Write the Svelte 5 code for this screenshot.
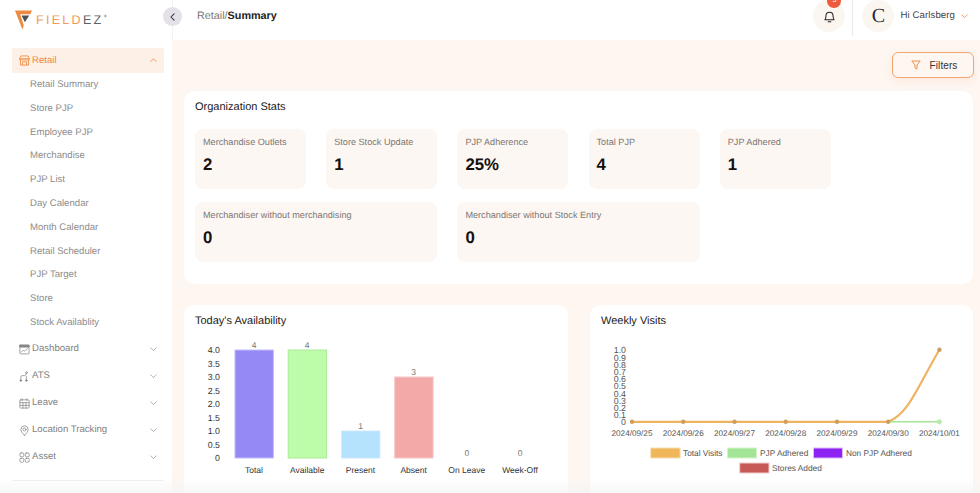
<script>
  const children = ['Retail Summary','Store PJP','Employee PJP','Merchandise','PJP List','Day Calendar','Month Calendar','Retail Scheduler','PJP Target','Store','Stock Availablity'];
  const groups = [
    { name: 'Dashboard', icon: 'dash' },
    { name: 'ATS', icon: 'ats' },
    { name: 'Leave', icon: 'leave' },
    { name: 'Location Tracking', icon: 'pin' },
    { name: 'Asset', icon: 'asset' }
  ];
  const topStats = [
    { label: 'Merchandise Outlets', value: '2' },
    { label: 'Store Stock Update', value: '1' },
    { label: 'PJP Adherence', value: '25%' },
    { label: 'Total PJP', value: '4' },
    { label: 'PJP Adhered', value: '1' }
  ];
  const wideStats = [
    { label: 'Merchandiser without merchandising', value: '0' },
    { label: 'Merchandiser without Stock Entry', value: '0' }
  ];

  // bar chart, coordinates inside a 384x188 svg
  const barBase = 153;
  const perUnit = 27;
  const bars = [
    { name: 'Total', v: 4, cx: 70, fill: '#9489f5', edge: '#c3bcf9' },
    { name: 'Available', v: 4, cx: 123.2, fill: '#bdfdaa', edge: '#a8ec98' },
    { name: 'Present', v: 1, cx: 176.5, fill: '#b5e2fc', edge: '#cdeafc' },
    { name: 'Absent', v: 3, cx: 229.7, fill: '#f3a9a8', edge: '#f7c6c5' },
    { name: 'On Leave', v: 0, cx: 282.8, fill: 'none', edge: 'none' },
    { name: 'Week-Off', v: 0, cx: 336, fill: 'none', edge: 'none' }
  ];
  const barTicks = ['4.0','3.5','3.0','2.5','2.0','1.5','1.0','0.5','0'];

  // line chart, coordinates inside a 383x188 svg
  const xs = [42, 93.2, 144.5, 195.7, 247, 298.2, 349.4];
  const dates = ['2024/09/25','2024/09/26','2024/09/27','2024/09/28','2024/09/29','2024/09/30','2024/10/01'];
  const y0 = 116.8;
  const y1 = 44.8;
  const lineTicks = ['1.0','0.9','0.8','0.7','0.6','0.5','0.4','0.3','0.2','0.1','0'];
  const legend = [
    { label: 'Total Visits', x: 60.7, y: 143, w: 29.4, fill: '#efb65a', edge: '#f8e0b8', tx: 93 },
    { label: 'PJP Adhered', x: 137.5, y: 143, w: 29, fill: '#a3e596', edge: '#d3f3cd', tx: 170 },
    { label: 'Non PJP Adhered', x: 223.5, y: 143, w: 29, fill: '#8e22f3', edge: '#dcbcfa', tx: 256 },
    { label: 'Stores Added', x: 149.7, y: 158, w: 29.3, fill: '#c75a57', edge: '#efcfce', tx: 182 }
  ];
</script>

{#snippet chevron(up, color)}
  <svg class="chev" viewBox="0 0 10 6" width="7" height="4.4" fill="none" stroke={color} stroke-width="1.1" stroke-linecap="round" stroke-linejoin="round">
    {#if up}<path d="M1 5l4-4 4 4" />{:else}<path d="M1 1l4 4 4-4" />{/if}
  </svg>
{/snippet}

{#snippet navIcon(kind)}
  <svg class="nav-icon" viewBox="0 0 12 12" width="11" height="11" fill="none" stroke="#858585" stroke-width="0.8" stroke-linejoin="round" stroke-linecap="round">
    {#if kind === 'dash'}
      <rect x="1" y="1.2" width="10" height="9.6" rx="0.8" />
      <rect x="1" y="1.2" width="10" height="2.2" fill="#858585" />
      <path d="M2.5 8.8l2-2 1.5 1 3.2-2.6" />
    {:else if kind === 'ats'}
      <path d="M2 10V6.5Q2 5 3.5 5H6Q7.6 5 7.6 3.5V3" />
      <circle cx="8.2" cy="1.8" r="1" />
      <circle cx="2" cy="10.4" r="0.9" fill="#858585" />
      <path d="M8 6v4" />
      <circle cx="8" cy="10.4" r="0.9" fill="#858585" />
    {:else if kind === 'leave'}
      <rect x="1" y="2" width="10" height="9" rx="0.8" />
      <path d="M1 5h10M3.5 0.8v2M8.5 0.8v2M1 8h10M4.3 5v6M7.6 5v6" />
    {:else if kind === 'pin'}
      <path d="M6 11.2C3.6 8.8 2 7 2 4.9a4 4 0 0 1 8 0C10 7 8.4 8.8 6 11.2z" />
      <circle cx="6" cy="4.9" r="1.7" />
    {:else}
      <rect x="1" y="1" width="4.2" height="4.2" rx="1.2" />
      <rect x="6.9" y="1" width="4.2" height="4.2" rx="1.2" />
      <rect x="1" y="6.9" width="4.2" height="4.2" rx="1.2" />
      <rect x="6.9" y="6.9" width="4.2" height="4.2" rx="1.2" />
    {/if}
  </svg>
{/snippet}

<div class="page">
  <aside class="sidebar">
    <div class="brand">
      <svg class="logo" viewBox="0 0 17 20" width="17" height="20">
        <path d="M0 0.5H17L15.4 4.2H5.2L8.8 15.4 7.4 19.6z" fill="#ee8a3f" />
        <path d="M6.6 5.4H14.2L9.9 12.2z" fill="#4b5157" />
      </svg>
      <span class="wordmark"><span class="orange">FIELD</span><span class="dark">EZ</span><sup>+</sup></span>
    </div>

    <nav class="nav">
      <div class="item active">
        <svg class="nav-icon" viewBox="0 0 12 12" width="11" height="11" fill="none" stroke="#f0853a" stroke-width="0.9" stroke-linejoin="round">
          <path d="M2 1h8l1.2 3H0.8zM0.8 4v1.4h10.4V4M1.6 5.4V11h8.8V5.4M3.8 11V7.4h4.4V11" />
        </svg>
        <span class="item-label">Retail</span>
        {@render chevron(true, '#f0853a')}
      </div>
      <ul class="children">
        {#each children as child}
          <li>{child}</li>
        {/each}
      </ul>
      <div class="groups">
        {#each groups as g}
          <div class="item">
            {@render navIcon(g.icon)}
            <span class="item-label">{g.name}</span>
            {@render chevron(false, '#999')}
          </div>
        {/each}
      </div>
    </nav>
    <div class="side-rule"></div>
  </aside>

  <button class="collapse" aria-label="Collapse sidebar">
    <svg viewBox="0 0 6 10" width="5" height="8" fill="none" stroke="#333" stroke-width="1.3" stroke-linecap="round" stroke-linejoin="round"><path d="M5 1L1 5l4 4" /></svg>
  </button>

  <div class="content">
    <header class="topbar">
      <div class="crumbs">Retail/<b>Summary</b></div>
      <div class="top-right">
        <div class="bell">
          <svg viewBox="0 0 14 14" width="13" height="13" fill="none" stroke="#222" stroke-width="1.1" stroke-linejoin="round" stroke-linecap="round">
            <path d="M2 10.5c1-1 1.2-2 1.2-4.2a3.8 3.8 0 0 1 7.6 0c0 2.2.2 3.2 1.2 4.2zM5.6 12.6h2.8" />
          </svg>
          <span class="badge">5</span>
        </div>
        <div class="vrule"></div>
        <div class="avatar">C</div>
        <span class="hi">Hi Carlsberg</span>
        <span class="hi-chev">{@render chevron(false, '#f0853a')}</span>
      </div>
    </header>

    <main class="main">
      <div class="filter-row">
        <button class="filters">
          <svg viewBox="0 0 12 12" width="10" height="10" fill="none" stroke="#f0853a" stroke-width="1.1" stroke-linejoin="round"><path d="M1 1.2h10L7.2 6v4.8L4.8 9.4V6z" /></svg>
          <span>Filters</span>
        </button>
      </div>

      <section class="card stats">
        <h2>Organization Stats</h2>
        <div class="tiles">
          {#each topStats as s}
            <div class="tile">
              <div class="tile-label">{s.label}</div>
              <div class="tile-value">{s.value}</div>
            </div>
          {/each}
          {#each wideStats as s}
            <div class="tile wide">
              <div class="tile-label">{s.label}</div>
              <div class="tile-value">{s.value}</div>
            </div>
          {/each}
        </div>
      </section>

      <div class="charts">
        <section class="card chart">
          <h2>Today's Availability</h2>
          <svg class="plot" viewBox="0 0 384 188" width="384" height="188">
            {#each barTicks as t, i}
              <text class="tick" x="36" y={44.7 + i * 13.5 + 3.5} text-anchor="end">{t}</text>
            {/each}
            {#each bars as b}
              {#if b.v > 0}
                <rect x={b.cx - 19} y={barBase - b.v * perUnit} width="38.4" height={b.v * perUnit} fill={b.fill} stroke={b.edge} stroke-width="1" />
              {/if}
              <text class="val" x={b.cx} y={barBase - b.v * perUnit - 2.5} text-anchor="middle">{b.v}</text>
              <text class="cat" x={b.cx} y="168" text-anchor="middle">{b.name}</text>
            {/each}
          </svg>
        </section>

        <section class="card chart">
          <h2>Weekly Visits</h2>
          <svg class="plot" viewBox="0 0 383 188" width="383" height="188">
            {#each lineTicks as t, i}
              <text class="tick soft" x="36" y={y1 + i * 7.2 + 3.5} text-anchor="end">{t}</text>
            {/each}
            <line x1={xs[5]} y1={y0} x2={xs[6]} y2={y0} stroke="#a3e596" stroke-width="1.6" />
            <circle cx={xs[6]} cy={y0} r="2" fill="#bfe9b4" stroke="#a3e596" stroke-width="0.8" />
            <path d="M{xs[0]} {y0} L{xs[5]} {y0} C 318 {y0 - 8}, 325 {y0 - 30}, {xs[6]} {y1}" fill="none" stroke="#eeb361" stroke-width="2.2" />
            {#each xs as x, i}
              <circle cx={x} cy={i === 6 ? y1 : y0} r="2.2" fill="#cd9e5f" />
              <text class="date" x={x} y="131" text-anchor="middle">{dates[i]}</text>
            {/each}
            {#each legend as l}
              <rect x={l.x} y={l.y} width={l.w} height="10" fill={l.fill} stroke={l.edge} stroke-width="1" />
              <text class="legend" x={l.tx} y={l.y + 8}>{l.label}</text>
            {/each}
          </svg>
        </section>
      </div>
    </main>
  </div>
  <div class="bottom-fade"></div>
</div>

<style>
  :global(body) {
    margin: 0;
    background: #fdf6f1;
    font-family: "Liberation Sans", Arial, sans-serif;
    text-rendering: geometricPrecision;
    overflow: hidden;
  }
  .page {
    position: relative;
    display: flex;
    width: 980px;
    height: 493px;
    overflow: hidden;
  }
  .bottom-fade {
    position: absolute;
    left: 0;
    right: 0;
    bottom: 0;
    height: 14px;
    background: linear-gradient(rgba(244, 244, 244, 0), rgba(244, 244, 244, 0.75));
    pointer-events: none;
  }
  .sidebar {
    flex: 0 0 172px;
    background: #fff;
    box-sizing: border-box;
    padding: 0 8px 0 12px;
    position: relative;
  }
  .brand {
    height: 48px;
    display: flex;
    align-items: flex-start;
    padding: 10px 0 0 3px;
    box-sizing: border-box;
    gap: 4px;
  }
  .wordmark {
    font-size: 12.5px;
    letter-spacing: 2.3px;
    line-height: 19px;
    margin-top: 1px;
    white-space: nowrap;
  }
  .orange { color: #ee9a5c; }
  .dark { color: #5a6066; }
  .wordmark sup {
    font-size: 6px;
    color: #5a6066;
    vertical-align: 6px;
    line-height: 0;
    letter-spacing: 0;
  }
  .item {
    height: 25px;
    display: flex;
    align-items: center;
    padding: 0 6px 0 7px;
    gap: 2px;
    font-size: 9.6px;
    color: #828282;
    border-radius: 1px;
  }
  .item .item-label { padding-bottom: 1px; }
  .item.active {
    background: #fdf0e6;
    color: #f0853a;
  }
  .item-label { flex: 1; }
  .chev { margin-right: 1px; flex: none; }
  .children {
    list-style: none;
    margin: 0;
    padding: 0 0 0 18px;
  }
  .children li {
    height: 23.8px;
    line-height: 24.8px;
    font-size: 9.6px;
    color: #8d8d8d;
  }
  .groups {
    margin-top: 2px;
    display: flex;
    flex-direction: column;
    gap: 2px;
  }
  .side-rule {
    position: absolute;
    left: 12px;
    right: 8px;
    top: 480px;
    border-top: 1px solid #efefef;
  }
  .collapse {
    position: absolute;
    left: 163px;
    top: 7px;
    width: 19px;
    height: 19px;
    border: 0;
    border-radius: 50%;
    background: #e4e1e8;
    padding: 0;
    display: flex;
    align-items: center;
    justify-content: center;
    z-index: 2;
  }
  .content {
    flex: 1;
    min-width: 0;
    display: flex;
    flex-direction: column;
  }
  .topbar {
    height: 40px;
    background: #fff;
    flex: none;
    display: flex;
    justify-content: space-between;
    box-sizing: border-box;
    border-left: 1px solid #f6f1f1;
    padding-left: 24px;
  }
  .crumbs {
    font-size: 10.8px;
    color: #777;
    line-height: 32px;
  }
  .crumbs b { color: #222; font-weight: 700; }
  .top-right {
    display: flex;
    align-items: flex-start;
    height: 36px;
  }
  .bell {
    position: relative;
    width: 32px;
    height: 32px;
    margin-right: 7px;
    border-radius: 50%;
    background: #fcf6f1;
    display: flex;
    align-items: center;
    justify-content: center;
  }
  .badge {
    position: absolute;
    left: 14px;
    top: -6px;
    width: 14px;
    height: 14px;
    border-radius: 50%;
    background: #ef5a3c;
    color: #fff;
    font-size: 7px;
    line-height: 14px;
    text-align: center;
  }
  .vrule {
    width: 1px;
    height: 36px;
    background: #e9e9e9;
    margin-right: 9px;
  }
  .avatar {
    width: 32px;
    height: 32px;
    border-radius: 50%;
    background: #fcf6f1;
    font-family: "Liberation Serif", serif;
    font-size: 20px;
    line-height: 33px;
    text-align: center;
    color: #1d2733;
    margin-right: 6px;
  }
  .hi {
    font-size: 9.6px;
    letter-spacing: 0.1px;
    color: #444;
    line-height: 32px;
    margin-right: 6px;
  }
  .hi-chev {
    display: flex;
    align-items: center;
    height: 32px;
    margin-right: 11px;
  }
  .main {
    flex: 1;
    padding: 12px 7px 0 12px;
    min-height: 0;
  }
  .filter-row {
    display: flex;
    justify-content: flex-end;
    height: 39px;
  }
  .filters {
    width: 82px;
    height: 26px;
    margin-right: -1px;
    box-sizing: border-box;
    border: 1px solid #f3a56e;
    border-radius: 6px;
    background: #fdf6f1;
    box-shadow: 0 3px 8px rgba(240, 150, 90, 0.12);
    display: flex;
    align-items: center;
    justify-content: center;
    gap: 9px;
    font: 10px "Liberation Sans", Arial, sans-serif;
    letter-spacing: 0.1px;
    color: #333;
    padding: 0 0 0 2px;
  }
  .card {
    background: #fff;
    border-radius: 10px;
    box-sizing: border-box;
  }
  .card h2 {
    margin: 0;
    font-size: 11px;
    font-weight: 400;
    color: #1e1a18;
    line-height: 14px;
  }
  .stats {
    height: 193px;
    padding: 9px 11px 0;
  }
  .tiles {
    display: grid;
    grid-template-columns: repeat(6, 111px);
    column-gap: 20.2px;
    row-gap: 13px;
    margin-top: 15px;
  }
  .tile {
    background: #fcf7f3;
    border-radius: 8px;
    height: 60px;
    padding: 7px 8px 0;
    box-sizing: border-box;
  }
  .tile.wide { grid-column: span 2; }
  .tile:nth-child(6) { grid-column: 1 / span 2; }
  .tile-label {
    font-size: 9.15px;
    color: #7c7672;
    line-height: 12px;
    white-space: nowrap;
  }
  .tile-value {
    font-size: 16.8px;
    font-weight: 700;
    color: #15100d;
    line-height: 20px;
    margin-top: 7px;
  }
  .charts {
    display: grid;
    grid-template-columns: 384px 383px;
    column-gap: 22px;
    margin-top: 21px;
  }
  .chart {
    height: 200px;
    padding: 9px 0 0;
    position: relative;
  }
  .chart h2 { padding: 0 11px; }
  .plot { display: block; position: absolute; left: 0; top: 0; }
  .plot text { font-family: "Liberation Sans", Arial, sans-serif; }
  .tick { font-size: 8.8px; fill: #333; }
  .tick.soft { fill: #555; }
  .val { font-size: 8.5px; fill: #777; }
  .cat { font-size: 8.5px; fill: #333; }
  .date { font-size: 8.2px; fill: #555; }
  .legend { font-size: 8.3px; fill: #555; }
</style>
